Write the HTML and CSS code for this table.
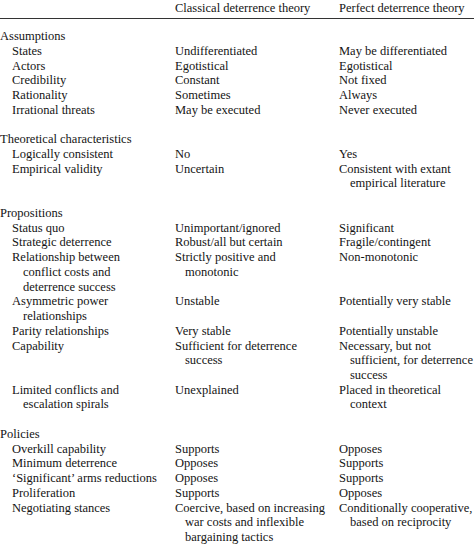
FILE: index.html
```html
<!DOCTYPE html>
<html>
<head>
<meta charset="utf-8">
<link rel="stylesheet" href="styles.css">
</head>
<body>
<div class="table">
  <div class="row head">
    <div class="c1"></div>
    <div class="c2">Classical deterrence theory</div>
    <div class="c3">Perfect deterrence theory</div>
  </div>
  <div class="body">
    <div class="row group first"><div class="c1 g">Assumptions</div></div>
    <div class="row"><div class="c1">States</div><div class="c2">Undifferentiated</div><div class="c3">May be differentiated</div></div>
    <div class="row"><div class="c1">Actors</div><div class="c2">Egotistical</div><div class="c3">Egotistical</div></div>
    <div class="row"><div class="c1">Credibility</div><div class="c2">Constant</div><div class="c3">Not fixed</div></div>
    <div class="row"><div class="c1">Rationality</div><div class="c2">Sometimes</div><div class="c3">Always</div></div>
    <div class="row"><div class="c1">Irrational threats</div><div class="c2">May be executed</div><div class="c3">Never executed</div></div>

    <div class="row group"><div class="c1 g">Theoretical characteristics</div></div>
    <div class="row"><div class="c1">Logically consistent</div><div class="c2">No</div><div class="c3">Yes</div></div>
    <div class="row"><div class="c1">Empirical validity</div><div class="c2">Uncertain</div><div class="c3">Consistent with extant<br>empirical literature</div></div>

    <div class="row group"><div class="c1 g">Propositions</div></div>
    <div class="row"><div class="c1">Status quo</div><div class="c2">Unimportant/ignored</div><div class="c3">Significant</div></div>
    <div class="row"><div class="c1">Strategic deterrence</div><div class="c2">Robust/all but certain</div><div class="c3">Fragile/contingent</div></div>
    <div class="row"><div class="c1">Relationship between<br>conflict costs and<br>deterrence success</div><div class="c2">Strictly positive and<br>monotonic</div><div class="c3">Non-monotonic</div></div>
    <div class="row"><div class="c1">Asymmetric power<br>relationships</div><div class="c2">Unstable</div><div class="c3">Potentially very stable</div></div>
    <div class="row"><div class="c1">Parity relationships</div><div class="c2">Very stable</div><div class="c3">Potentially unstable</div></div>
    <div class="row"><div class="c1">Capability</div><div class="c2">Sufficient for deterrence<br>success</div><div class="c3">Necessary, but not<br>sufficient, for deterrence<br>success</div></div>
    <div class="row"><div class="c1">Limited conflicts and<br>escalation spirals</div><div class="c2">Unexplained</div><div class="c3">Placed in theoretical<br>context</div></div>

    <div class="row group"><div class="c1 g">Policies</div></div>
    <div class="row"><div class="c1">Overkill capability</div><div class="c2">Supports</div><div class="c3">Opposes</div></div>
    <div class="row"><div class="c1">Minimum deterrence</div><div class="c2">Opposes</div><div class="c3">Supports</div></div>
    <div class="row"><div class="c1">&lsquo;Significant&rsquo; arms reductions</div><div class="c2">Opposes</div><div class="c3">Supports</div></div>
    <div class="row"><div class="c1">Proliferation</div><div class="c2">Supports</div><div class="c3">Opposes</div></div>
    <div class="row"><div class="c1">Negotiating stances</div><div class="c2">Coercive, based on increasing<br>war costs and inflexible<br>bargaining tactics</div><div class="c3">Conditionally cooperative,<br>based on reciprocity</div></div>
  </div>
</div>
</body>
</html>
```

FILE: styles.css
```css
html, body {
  margin: 0;
  padding: 0;
  background: #ffffff;
}
body {
  width: 474px;
  height: 547px;
  overflow: hidden;
  font-family: "Liberation Serif", "Times New Roman", serif;
  font-size: 12.5px;
  line-height: 14.74px;
  color: #141414;
}
.table {
  display: flex;
  flex-direction: column;
  padding-top: 1px;
}
.row {
  display: grid;
  grid-template-columns: 175px 164px 135px;
  white-space: nowrap;
}
.head {
  padding-bottom: 2px;
  border-bottom: 1.5px solid #333333;
}
.body {
  padding-top: 10.4px;
}
.group {
  margin-top: 14.74px;
}
.group.first {
  margin-top: 0;
}
.c1 {
  padding-left: 23px;
  text-indent: -11px;
}
.c1.g {
  padding-left: 0;
  text-indent: 0;
}
.c2 {
  padding-left: 10px;
  text-indent: -10px;
}
.c3 {
  padding-left: 11px;
  text-indent: -11px;
}
.head .c2, .head .c3 {
  padding-left: 0;
  text-indent: 0;
}
```
